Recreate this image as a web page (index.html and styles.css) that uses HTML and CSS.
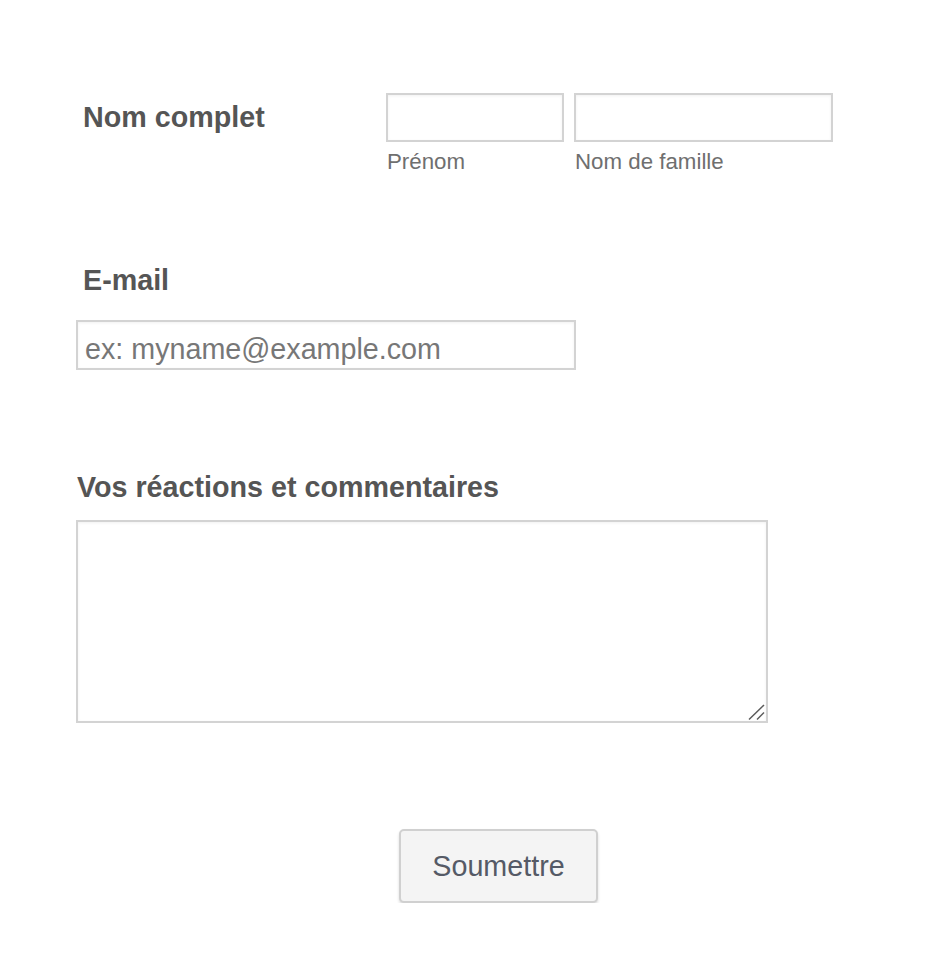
FILE: index.html
```html
<!DOCTYPE html>
<html lang="fr">
<head>
<meta charset="utf-8">
<title>Formulaire</title>
<link rel="stylesheet" href="styles.css">
</head>
<body>
<form class="form">
  <div class="row row-name">
    <label class="label label-left">Nom complet</label>
    <div class="name-fields">
      <div class="name-field first">
        <input class="input" type="text">
        <span class="sublabel">Prénom</span>
      </div>
      <div class="name-field last">
        <input class="input" type="text">
        <span class="sublabel">Nom de famille</span>
      </div>
    </div>
  </div>

  <div class="row row-email">
    <label class="label label-email">E-mail</label>
    <input class="input input-email" type="email" placeholder="ex: myname@example.com">
  </div>

  <div class="row row-comments">
    <label class="label label-top">Vos réactions et commentaires</label>
    <div class="textarea-wrap">
      <textarea class="textarea"></textarea>
      <svg class="resize-handle" width="18" height="18" viewBox="0 0 18 18" aria-hidden="true">
        <line x1="1" y1="16.5" x2="16" y2="2" stroke="#5a5a5a" stroke-width="1.5"/>
        <line x1="9" y1="16.5" x2="16" y2="9.5" stroke="#5a5a5a" stroke-width="1.5"/>
      </svg>
    </div>
  </div>

  <div class="row row-submit">
    <button type="button" class="submit">Soumettre</button>
  </div>
</form>
</body>
</html>
```
FILE: styles.css
```css
html, body {
  margin: 0;
  padding: 0;
  background: #ffffff;
}

body {
  font-family: "Liberation Sans", Arial, sans-serif;
  color: #555555;
}

.form {
  padding: 93px 0 0 76px;
}

.row {
  display: flex;
}

.label {
  font-size: 28.7px;
  line-height: 33px;
  font-weight: 700;
  color: #555555;
}

.row-name {
  align-items: flex-start;
}

.label-left {
  width: 310px;
  padding-left: 7px;
  box-sizing: border-box;
  margin-top: 8px;
}

.name-fields {
  display: flex;
  gap: 10px;
}

.name-field {
  display: flex;
  flex-direction: column;
}

.name-field.first .input {
  width: 178px;
}

.name-field.last .input {
  width: 259px;
}

.input {
  box-sizing: border-box;
  height: 49px;
  margin: 0;
  border: 2px solid #d3d3d3;
  border-radius: 0;
  background: #ffffff;
  box-shadow: inset 0 1px 3px rgba(0, 0, 0, 0.06);
  font-family: "Liberation Sans", Arial, sans-serif;
  font-size: 28.7px;
  color: #555555;
  padding: 0 7px;
  outline: none;
}

.sublabel {
  margin-top: 7px;
  padding-left: 1px;
  font-size: 22.3px;
  line-height: 26px;
  color: #6f6f6f;
}

.row-email {
  flex-direction: column;
  align-items: flex-start;
  margin-top: 89px;
}

.label-email {
  padding-left: 7px;
}

.input-email {
  width: 500px;
  height: 50px;
  margin-top: 23px;
  padding: 8px 7px 0 7px;
}

.input-email::placeholder {
  color: #777777;
  opacity: 1;
}

.row-comments {
  flex-direction: column;
  align-items: flex-start;
  margin-top: 101px;
}

.label-top {
  padding-left: 1px;
}

.textarea-wrap {
  position: relative;
  display: flex;
  margin-top: 16px;
}

.textarea {
  box-sizing: border-box;
  width: 692px;
  height: 203px;
  margin: 0;
  border: 2px solid #d3d3d3;
  border-radius: 0;
  box-shadow: inset 0 1px 3px rgba(0, 0, 0, 0.06);
  font-family: "Liberation Sans", Arial, sans-serif;
  font-size: 28.7px;
  color: #555555;
  outline: none;
  resize: none;
}

.resize-handle {
  position: absolute;
  right: 2px;
  bottom: 2px;
}

.row-submit {
  justify-content: flex-start;
  padding-left: 323px;
  margin-top: 106px;
}

.submit {
  box-sizing: border-box;
  width: 199px;
  height: 74px;
  border: 2px solid #d0d0d0;
  border-radius: 5px;
  background: #f4f4f4;
  box-shadow: 0 2px 3px rgba(0, 0, 0, 0.15);
  font-family: "Liberation Sans", Arial, sans-serif;
  font-size: 28.7px;
  color: #555a66;
  cursor: pointer;
  padding: 0;
}
```
